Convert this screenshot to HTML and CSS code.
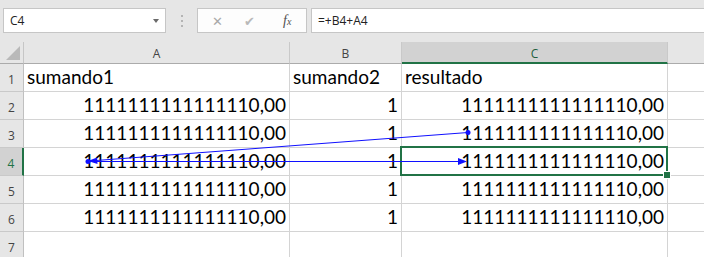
FILE: index.html
```html
<!DOCTYPE html>
<html lang="es">
<head>
    <meta charset="UTF-8">
    <title>Libro1 - Excel</title>
    <link rel="stylesheet" href="styles.css">
</head>
<body>
    <div class="app">
        <div class="formula-bar">
            <div class="name-box">
                <span>C4</span>
                <span class="caret"></span>
            </div>
            <div class="grip"><i></i><i></i><i></i></div>
            <div class="fx-buttons">
                <span class="btn-x">&#10005;</span>
                <span class="btn-ok">&#10004;</span>
                <span class="btn-fx">f<sub>x</sub></span>
            </div>
            <div class="formula-input">=+B4+A4</div>
        </div>

        <div class="sheet">
            <div class="corner"><span class="tri"></span></div>
            <div class="col-head">A</div>
            <div class="col-head">B</div>
            <div class="col-head active">C</div>
            <div class="col-head last"></div>

            <div class="row-head">1</div>
            <div class="cell">sumando1</div>
            <div class="cell">sumando2</div>
            <div class="cell">resultado</div>
            <div class="cell last"></div>

            <div class="row-head">2</div>
            <div class="cell num">1111111111111110,00</div>
            <div class="cell num">1</div>
            <div class="cell num">1111111111111110,00</div>
            <div class="cell last"></div>

            <div class="row-head">3</div>
            <div class="cell num">1111111111111110,00</div>
            <div class="cell num">1</div>
            <div class="cell num">1111111111111110,00</div>
            <div class="cell last"></div>

            <div class="row-head active">4</div>
            <div class="cell num">1111111111111110,00</div>
            <div class="cell num">1</div>
            <div class="cell num selected">1111111111111110,00</div>
            <div class="cell last"></div>

            <div class="row-head">5</div>
            <div class="cell num">1111111111111110,00</div>
            <div class="cell num">1</div>
            <div class="cell num">1111111111111110,00</div>
            <div class="cell last"></div>

            <div class="row-head">6</div>
            <div class="cell num">1111111111111110,00</div>
            <div class="cell num">1</div>
            <div class="cell num">1111111111111110,00</div>
            <div class="cell last"></div>

            <div class="row-head">7</div>
            <div class="cell"></div>
            <div class="cell"></div>
            <div class="cell"></div>
            <div class="cell last"></div>
        </div>

        <!-- trace arrows -->
        <svg class="arrows" width="704" height="257" viewBox="0 0 704 257">
            <line x1="468" y1="132.5" x2="96" y2="160.5" stroke="#1010ff" stroke-width="1"/>
            <circle cx="468" cy="132.5" r="2.5" fill="#1010ff"/>
            <polygon points="88,161 97,157.5 97.5,164" fill="#1010ff"/>
            <line x1="88" y1="161.5" x2="460" y2="161.5" stroke="#1010ff" stroke-width="1"/>
            <circle cx="88" cy="161.5" r="2.5" fill="#1010ff"/>
            <polygon points="467,161.5 458,158 458,165" fill="#1010ff"/>
        </svg>
    </div>
</body>
</html>
```

FILE: styles.css
```css
body {
    margin: 0;
    background-color: #ffffff;
    font-family: "Open Sans", "Noto Sans", sans-serif;
}
.app {
    position: relative;
    width: 704px;
    height: 257px;
    overflow: hidden;
}
.formula-bar {
    display: flex;
    align-items: center;
    height: 42px;
    padding: 0 0 0 3px;
    box-sizing: border-box;
    background-color: #e6e6e6;
}
.formula-bar > div {
    height: 25px;
    box-sizing: border-box;
    margin-bottom: 1px;
}
.name-box {
    width: 163px;
    display: flex;
    align-items: center;
    justify-content: space-between;
    padding: 0 6px 0 6px;
    background: #ffffff;
    border: 1px solid #c6c6c6;
    font-size: 12px;
    color: #222;
}
.caret {
    width: 0;
    height: 0;
    border-left: 3.5px solid transparent;
    border-right: 3.5px solid transparent;
    border-top: 4px solid #6a6a6a;
}
.grip {
    width: 31px;
    display: flex;
    flex-direction: column;
    align-items: center;
    justify-content: center;
    gap: 3px;
}
.grip i {
    width: 2px;
    height: 2px;
    background: #b4b4b4;
}
.fx-buttons {
    width: 110px;
    display: flex;
    align-items: center;
    background: #fdfdfd;
    border: 1px solid #c6c6c6;
    color: #a9a9a9;
}
.btn-x {
    width: 14px;
    margin-left: 14px;
    font-size: 13px;
}
.btn-ok {
    width: 14px;
    margin-left: 18px;
    font-size: 13px;
    color: #b9b9b9;
}
.btn-fx {
    margin-left: 25px;
    font-family: "Liberation Serif", serif;
    font-style: italic;
    font-size: 14px;
    color: #505050;
}
.btn-fx sub {
    font-size: 10px;
    vertical-align: 0;
}
.formula-input {
    flex: 1;
    margin-left: 4px;
    display: flex;
    align-items: center;
    padding-left: 6px;
    background: #ffffff;
    border: 1px solid #c6c6c6;
    border-right: none;
    font-size: 12px;
    color: #222;
}
.sheet {
    display: grid;
    grid-template-columns: 24px 266px 112px 266px 1fr;
    grid-template-rows: 22px;
    grid-auto-rows: 28px;
}
.corner,
.col-head,
.row-head {
    background-color: #e6e6e6;
    box-sizing: border-box;
    font-size: 12px;
    color: #444;
    display: flex;
    align-items: center;
    justify-content: center;
}
.corner {
    position: relative;
    border-bottom: 1px solid #ababab;
    border-right: 1px solid #c6c6c6;
}
.tri {
    position: absolute;
    right: 3px;
    bottom: 3px;
    width: 0;
    height: 0;
    border-left: 14px solid transparent;
    border-bottom: 14px solid #b9b9b9;
}
.col-head {
    border-bottom: 1px solid #ababab;
    border-right: 1px solid #c9c9c9;
    padding-top: 2px;
}
.col-head.active {
    background-color: #d2d2d2;
    border-bottom: 2px solid #217346;
    color: #1f5f3f;
}
.col-head.last {
    border-right: none;
}
.row-head {
    border-bottom: 1px solid #c9c9c9;
    border-right: 1px solid #c0c0c0;
    padding-top: 4px;
}
.row-head.active {
    background-color: #d2d2d2;
    border-right: 2px solid #217346;
    color: #217346;
}
.cell {
    box-sizing: border-box;
    border-right: 1px solid #d4d4d4;
    border-bottom: 1px solid #d4d4d4;
    padding: 0 3px 3px 3px;
    display: flex;
    align-items: flex-end;
    font-family: Lato, "Liberation Sans", sans-serif;
    font-size: 19px;
    color: #000;
    white-space: nowrap;
}
.cell.num {
    justify-content: flex-end;
}
.cell.last {
    border-right: none;
}
.selected {
    position: relative;
}
.selected::after {
    content: "";
    position: absolute;
    top: -2px;
    left: -2px;
    right: -1px;
    bottom: -1px;
    border: 2px solid #217346;
}
.selected::before {
    content: "";
    position: absolute;
    right: -4px;
    bottom: -4px;
    width: 6px;
    height: 6px;
    background: #217346;
    border: 1px solid #ffffff;
    z-index: 1;
}
.arrows {
    position: absolute;
    top: 0;
    left: 0;
    pointer-events: none;
}
```
